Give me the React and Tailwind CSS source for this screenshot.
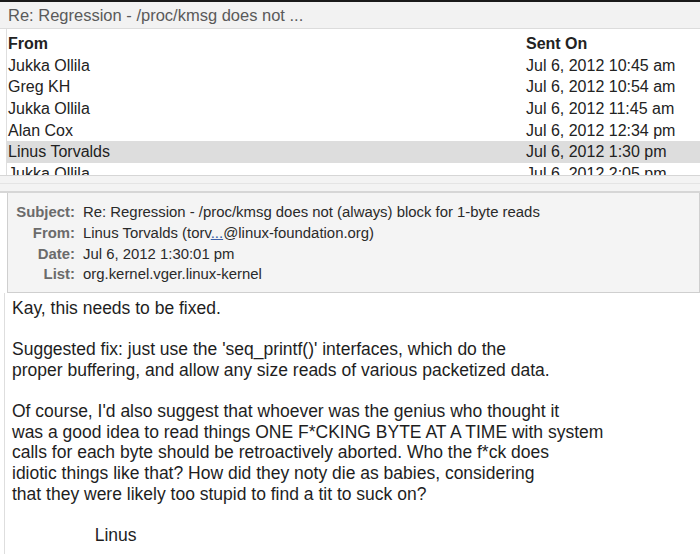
import React from 'react';

const messages = [
  { from: 'Jukka Ollila', sent: 'Jul 6, 2012 10:45 am' },
  { from: 'Greg KH', sent: 'Jul 6, 2012 10:54 am' },
  { from: 'Jukka Ollila', sent: 'Jul 6, 2012 11:45 am' },
  { from: 'Alan Cox', sent: 'Jul 6, 2012 12:34 pm' },
  { from: 'Linus Torvalds', sent: 'Jul 6, 2012 1:30 pm', selected: true },
  { from: 'Jukka Ollila', sent: 'Jul 6, 2012 2:05 pm' },
];

const headers = [
  { label: 'Subject:', value: 'Re: Regression - /proc/kmsg does not (always) block for 1-byte reads' },
  { label: 'From:', value: 'from' },
  { label: 'Date:', value: 'Jul 6, 2012 1:30:01 pm' },
  { label: 'List:', value: 'org.kernel.vger.linux-kernel' },
];

const body = [
  'Kay, this needs to be fixed.',
  '',
  "Suggested fix: just use the 'seq_printf()' interfaces, which do the",
  'proper buffering, and allow any size reads of various packetized data.',
  '',
  "Of course, I'd also suggest that whoever was the genius who thought it",
  'was a good idea to read things ONE F*CKING BYTE AT A TIME with system',
  'calls for each byte should be retroactively aborted. Who the f*ck does',
  'idiotic things like that? How did they noty die as babies, considering',
  'that they were likely too stupid to find a tit to suck on?',
  '',
  '                 Linus',
];

const App = () => {
  return (
    <div className="w-[700px] h-[554px] overflow-hidden bg-white border-t-2 border-[#1a1a1a] font-['Liberation_Sans',Arial,sans-serif]">
      {/* Thread title */}
      <div className="h-[27px] flex items-center px-2 bg-[#f2f2f2] border-b border-[#dcdcdc] text-[16.5px] text-[#5a5a5a]">
        Re: Regression - /proc/kmsg does not ...
      </div>

      {/* Message list */}
      <div className="ml-[6px] h-[146px] overflow-hidden border-l border-[#dedede] bg-white pt-[4px] text-[16px] text-[#222]">
        <div className="flex h-[21.7px] items-center font-bold">
          <span className="pl-[1px] w-[519px]">From</span>
          <span>Sent On</span>
        </div>
        {messages.map((m, i) => (
          <div
            key={i}
            className={`flex h-[21.7px] items-center ${m.selected ? 'bg-[#dddddd]' : ''}`}
          >
            <span className="pl-[1px] w-[519px]">{m.from}</span>
            <span>{m.sent}</span>
          </div>
        ))}
      </div>

      {/* Splitter */}
      <div className="h-[18px] bg-[#f3f3f3] border-t border-b-2 border-[#d6d6d6] flex flex-col justify-center">
        <div className="h-px bg-[#e4e4e4]" />
      </div>

      {/* Headers */}
      <div className="ml-[7px] h-[100px] border border-t-0 border-[#cfcfcf] bg-[#f4f4f4] pt-[9px] text-[14.9px]">
        {headers.map((h) => (
          <div key={h.label} className="flex h-[20.7px] items-center">
            <span className="w-[67px] text-right font-bold text-[#6b6b6b]">{h.label}</span>
            <span className="pl-[8px] text-[#2a2a2a]">
              {h.value === 'from' ? (
                <>
                  Linus Torvalds (torv<span className="underline text-[#3a5fa8]">...</span>@linux-foundation.org)
                </>
              ) : (
                h.value
              )}
            </span>
          </div>
        ))}
      </div>

      {/* Body */}
      <div className="ml-[4px] h-[300px] border-l border-[#dedede] pl-[7px] pt-[5px] text-[17.5px] leading-[20.65px] text-[#1e1e1e] whitespace-pre">
        {body.map((line, i) => (
          <div key={i} className="h-[20.65px]">{line}</div>
        ))}
      </div>
    </div>
  );
};

export default App;
